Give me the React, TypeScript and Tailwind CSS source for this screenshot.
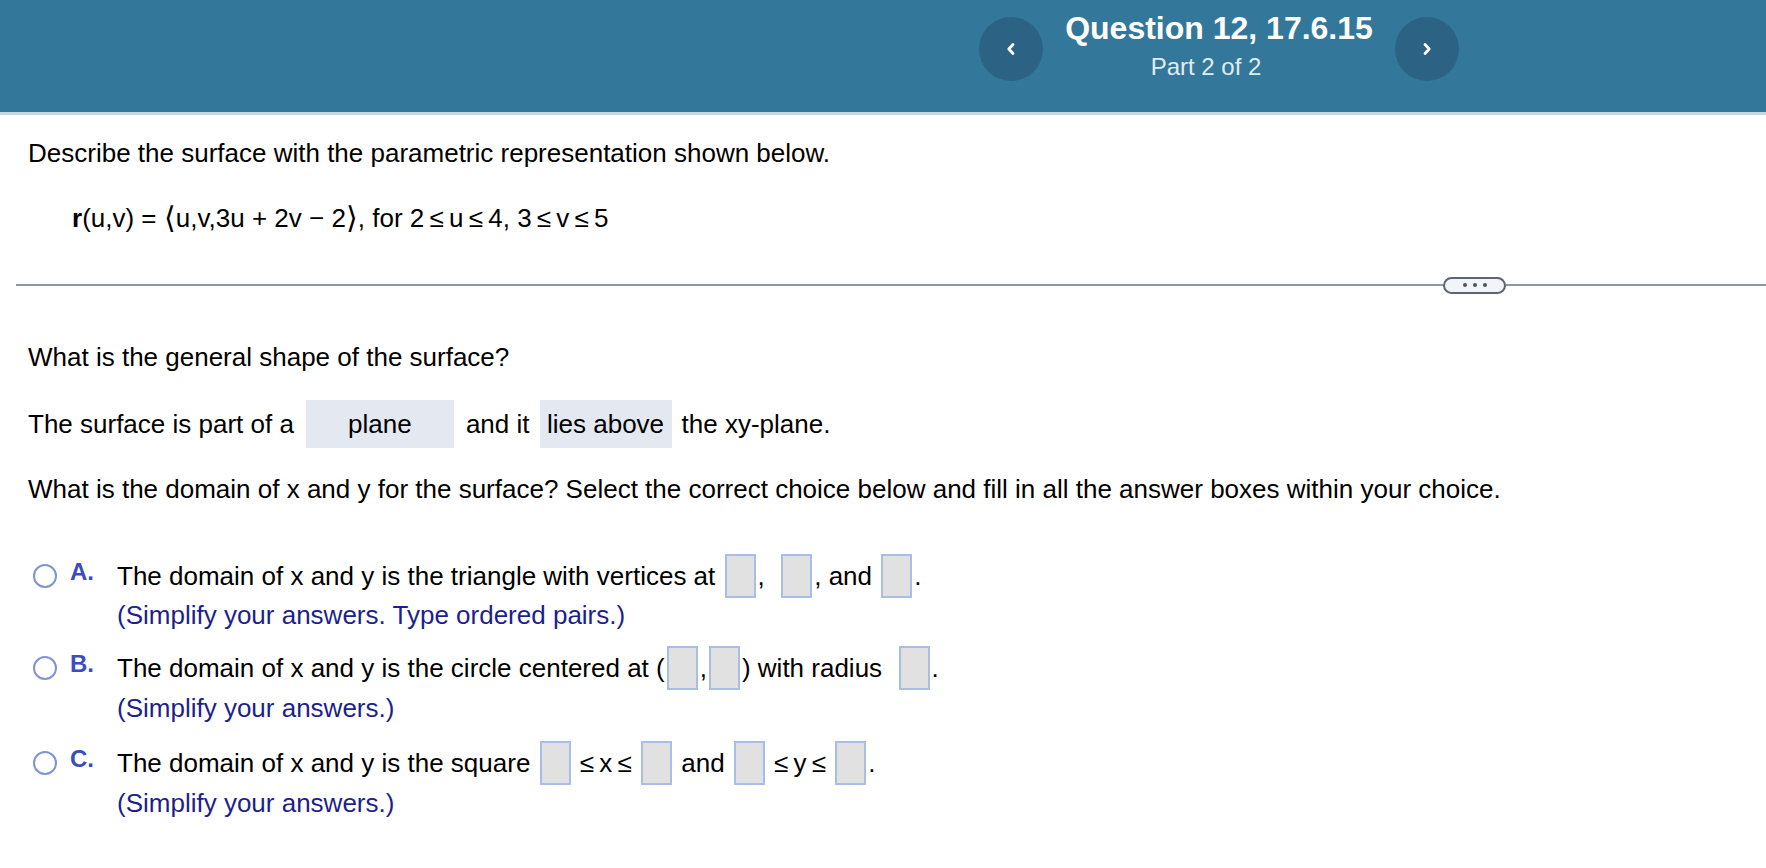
const font = { fontFamily: '"Liberation Sans", Arial, Helvetica, sans-serif' };

function AnswerBox() {
  return (
    <span className="inline-block w-[31px] h-[44px] mx-[2px] bg-[#e1e1e1] border-2 border-[#a9bde6]" />
  );
}

function Chevron({ dir }: { dir: "left" | "right" }) {
  return (
    <svg width="12" height="16" viewBox="0 0 12 16" fill="none">
      <path
        d={dir === "left" ? "M8 3.5 L3.8 8 L8 12.5" : "M4 3.5 L8.2 8 L4 12.5"}
        stroke="white"
        strokeWidth="2.8"
        strokeLinecap="round"
        strokeLinejoin="round"
      />
    </svg>
  );
}

function Radio() {
  return (
    <span className="w-[24px] h-[24px] rounded-full border-[2.5px] border-[#7f93d8] bg-white shrink-0" />
  );
}

function OptionRow({ letter, children }: { letter: string; children: React.ReactNode }) {
  return (
    <div className="flex items-center h-[44px] pl-[33px]">
      <Radio />
      <span className="ml-[13px] w-[47px] text-[24px] font-bold text-[#3a4ec2] leading-[30px] -translate-y-[4px]">
        {letter}
      </span>
      <div className="flex items-center whitespace-pre">{children}</div>
    </div>
  );
}

export default function App() {
  return (
    <div className="w-[1766px] min-h-[868px] bg-white text-black" style={font}>
      {/* Header */}
      <div className="h-[115px] bg-[#33789a] border-b-[3px] border-[#c9d6e0] flex justify-end pr-[307px]">
        <button className="mt-[17px] w-[64px] h-[64px] rounded-full bg-[#2c6384] flex items-center justify-center">
          <Chevron dir="left" />
        </button>
        <div className="w-[352px] text-center">
          <div className="mt-[9px] text-[32px] leading-[38px] font-bold text-white">Question 12, 17.6.15</div>
          <div className="mt-[6px] pr-[26px] text-[24px] leading-[28px] text-[#e2ebf2]">Part 2 of 2</div>
        </div>
        <button className="mt-[17px] w-[64px] h-[64px] rounded-full bg-[#2c6384] flex items-center justify-center">
          <Chevron dir="right" />
        </button>
      </div>

      <div className="text-[26px] leading-[30px]">
        <div className="mt-[23px] pl-[28px]">Describe the surface with the parametric representation shown below.</div>

        <div className="mt-[35px] pl-[72px] whitespace-pre flex items-center h-[30px]">
          <span className="font-bold">r</span>
          <span>(u,v) = </span>
          <span className="text-[30px] leading-none">{"\u27E8"}</span>
          <span>u,v,3u + 2v {"\u2212"} 2</span>
          <span className="text-[30px] leading-none">{"\u27E9"}</span>
          <span>, for 2{"\u2009"}≤{"\u2009"}u{"\u2009"}≤{"\u2009"}4, 3{"\u2009"}≤{"\u2009"}v{"\u2009"}≤{"\u2009"}5</span>
        </div>

        {/* Divider */}
        <div className="mt-[44px] h-[16px] pl-[16px] flex items-center">
          <div className="flex-1 h-[2px] bg-[#8d96a5]" />
          <button className="w-[63px] h-[17px] rounded-full border-2 border-[#5b6573] bg-[#f2f4f7] flex items-center justify-center gap-[6px]">
            <span className="w-[4px] h-[4px] rounded-full bg-[#4b5563]" />
            <span className="w-[4px] h-[4px] rounded-full bg-[#4b5563]" />
            <span className="w-[4px] h-[4px] rounded-full bg-[#4b5563]" />
          </button>
          <div className="w-[260px] h-[2px] bg-[#8d96a5]" />
        </div>

        <div className="mt-[49px] pl-[28px]">What is the general shape of the surface?</div>

        <div className="mt-[28px] pl-[28px] h-[48px] flex items-center gap-[12px]">
          <span>The surface is part of a</span>
          <span className="w-[148px] h-[48px] bg-[#e4e8f1] flex items-center justify-center">plane</span>
          <span className="-mr-[2px]">and it</span>
          <span className="w-[132px] h-[48px] bg-[#e4e8f1] flex items-center justify-center">lies above</span>
          <span className="-ml-[2px]">the xy-plane.</span>
        </div>

        <div className="mt-[26px] pl-[28px]">
          What is the domain of x and y for the surface? Select the correct choice below and fill in all the answer boxes within your choice.
        </div>

        {/* Option A */}
        <div className="mt-[50px]">
          <OptionRow letter="A.">
            <span>The domain of x and y is the triangle with vertices at </span>
            <AnswerBox />
            <span>,  </span>
            <AnswerBox />
            <span>, and </span>
            <AnswerBox />
            <span>.</span>
          </OptionRow>
        </div>
        <div className="mt-[2px] pl-[117px] text-[#1d1f8c]">(Simplify your answers. Type ordered pairs.)</div>

        {/* Option B */}
        <div className="mt-[16px]">
          <OptionRow letter="B.">
            <span>The domain of x and y is the circle centered at (</span>
            <AnswerBox />
            <span>,</span>
            <AnswerBox />
            <span>) with radius  </span>
            <AnswerBox />
            <span>.</span>
          </OptionRow>
        </div>
        <div className="mt-[3px] pl-[117px] text-[#1d1f8c]">(Simplify your answers.)</div>

        {/* Option C */}
        <div className="mt-[18px]">
          <OptionRow letter="C.">
            <span>The domain of x and y is the square </span>
            <AnswerBox />
            <span> ≤{"\u2009"}x{"\u2009"}≤ </span>
            <AnswerBox />
            <span> and </span>
            <AnswerBox />
            <span> ≤{"\u2009"}y{"\u2009"}≤ </span>
            <AnswerBox />
            <span>.</span>
          </OptionRow>
        </div>
        <div className="mt-[3px] pl-[117px] text-[#1d1f8c]">(Simplify your answers.)</div>
      </div>
    </div>
  );
}
